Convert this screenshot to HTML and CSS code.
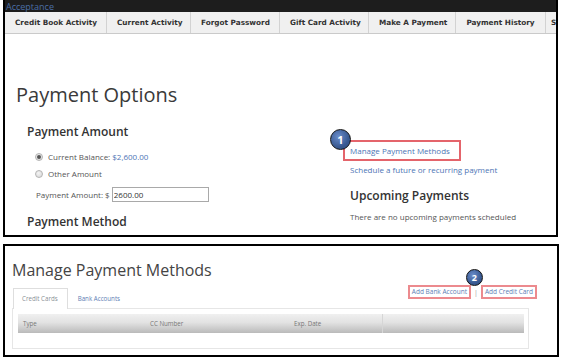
FILE: index.html
```html
<!DOCTYPE html>
<html>
<head>
<meta charset="utf-8">
<link rel="stylesheet" href="styles.css">
</head>
<body>
<div class="shot shot-top">
  <div class="topbar"><span class="env">Acceptance</span></div>
  <nav class="nav">
    <span class="nav-item">Credit Book Activity</span>
    <span class="nav-item">Current Activity</span>
    <span class="nav-item">Forgot Password</span>
    <span class="nav-item">Gift Card Activity</span>
    <span class="nav-item">Make A Payment</span>
    <span class="nav-item">Payment History</span>
    <span class="nav-item">Statements</span>
  </nav>
  <div class="page">
    <h1 class="title">Payment Options</h1>
    <div class="cols">
      <section class="col-left">
        <h2 class="sub">Payment Amount</h2>
        <div class="opt"><span class="radio checked"></span>Current Balance: <span class="amt">$2,600.00</span></div>
        <div class="opt"><span class="radio"></span>Other Amount</div>
        <div class="amount-row">Payment Amount: $ <input class="amount-input" type="text" value="2600.00"></div>
        <h2 class="sub sub-method">Payment Method</h2>
      </section>
      <section class="col-right">
        <div class="callout"><span class="badge badge-1">1</span><a class="link">Manage Payment Methods</a></div>
        <a class="link link-block">Schedule a future or recurring payment</a>
        <h2 class="sub sub-upcoming">Upcoming Payments</h2>
        <p class="note">There are no upcoming payments scheduled</p>
      </section>
    </div>
  </div>
</div>

<div class="shot shot-bottom">
  <h1 class="title-2">Manage Payment Methods</h1>
  <div class="tab-row">
    <div class="tabs">
      <span class="tab active">Credit Cards</span>
      <span class="tab">Bank Accounts</span>
    </div>
    <div class="actions">
      <span class="badge badge-2">2</span>
      <a class="action">Add Bank Account</a>
      <span class="pipe">|</span>
      <a class="action">Add Credit Card</a>
    </div>
  </div>
  <div class="tab-panel">
    <div class="thead">
      <span class="th">Type</span>
      <span class="th">CC Number</span>
      <span class="th">Exp. Date</span>
      <span class="th th-last"></span>
    </div>
  </div>
</div>
</body>
</html>
```

FILE: styles.css
```css
* { box-sizing: border-box; }
html, body { margin: 0; padding: 0; background: #fff; }
body {
  font-family: "Open Sans", "Liberation Sans", sans-serif;
  color: #555;
  width: 564px;
  height: 363px;
  overflow: hidden;
}

.shot {
  border: 2px solid #000;
  background: #fff;
  overflow: hidden;
  position: relative;
}

.shot-top {
  margin-left: 3px;
  width: 555px;
  height: 237px;
  border-top: none;
}

.topbar {
  height: 12px;
  background: #1d1d1d;
  padding-left: 1px;
  line-height: 9px;
  overflow: hidden;
}
.env {
  font-size: 9px;
  color: #4b6ea6;
}

.nav {
  display: flex;
  height: 22px;
  background: #f0f0f0;
  border-bottom: 1px solid #cacaca;
  overflow: hidden;
  white-space: nowrap;
}
.nav-item {
  flex: none;
  font-family: "DejaVu Sans", Verdana, sans-serif;
  font-weight: bold;
  font-size: 7.3px;
  color: #333;
  line-height: 21px;
  padding: 0 10px;
  border-right: 1px solid #d2d2d2;
  text-align: center;
}
.nav-item:nth-child(1) { width: 102px; }
.nav-item:nth-child(2) { width: 84px; }
.nav-item:nth-child(3) { width: 89px; }
.nav-item:nth-child(4) { width: 89px; }
.nav-item:nth-child(5) { width: 87px; }
.nav-item:nth-child(6) { width: 90px; }
.nav-item:nth-child(7) { padding-left: 5px; border-right: none; }

.page {
  padding-left: 11px;
}
.title {
  margin: 49px 0 0;
  font-size: 20px;
  font-weight: 400;
  line-height: 24px;
  color: #3a3a3a;
}
.cols {
  display: grid;
  grid-template-columns: 334px 1fr;
  margin-top: 17px;
}
.sub {
  margin: 0;
  font-size: 12px;
  font-weight: 600;
  line-height: 16px;
  color: #333;
}
.col-left .sub { padding-left: 11px; }
.sub-method { margin-top: 10px; }

.opt {
  display: flex;
  align-items: center;
  font-size: 8px;
  line-height: 17px;
  padding-left: 19px;
}
.radio {
  width: 8px;
  height: 8px;
  border-radius: 50%;
  border: 1px solid #b4b4b4;
  background: radial-gradient(circle at 40% 35%, #f4f4f4, #d6d6d6);
  margin-right: 5px;
  flex: none;
  display: flex;
  align-items: center;
  justify-content: center;
}
.radio.checked::after {
  content: "";
  width: 4px;
  height: 4px;
  border-radius: 50%;
  background: #555;
}
.amt { color: #4d75b5; margin-left: 2px; }
.col-left .opt:nth-of-type(1) { margin-top: 8px; }

.amount-row {
  display: flex;
  align-items: center;
  height: 20px;
  margin-top: 2px;
  padding-left: 20px;
  font-size: 8px;
  white-space: pre;
}
.amount-input {
  width: 97px;
  height: 15px;
  border: 1px solid #a9a9a9;
  padding: 0 1px;
  margin: 0;
  font-family: "Open Sans", "Liberation Sans", sans-serif;
  font-size: 8px;
  color: #333;
  outline: none;
}

.col-right {
  font-size: 8px;
  line-height: 17px;
}
.link {
  color: #4d75b5;
  font-size: 8px;
  line-height: 17px;
  text-decoration: none;
}
.link-block { display: block; }
.callout {
  position: relative;
  display: block;
  width: max-content;
  margin-top: 16px;
  margin-left: -7px;
  border: 2px solid #e4646b;
  padding: 0 9px 0 5px;
  height: 21px;
  line-height: 17px;
}
.callout .link { display: block; }
.sub-upcoming { margin-top: 10px; }
.note {
  margin: 4px 0 0;
  font-size: 8px;
  line-height: 17px;
  color: #555;
}

.badge {
  position: absolute;
  border-radius: 50%;
  border: 1.5px solid #111;
  background: radial-gradient(circle at 40% 35%, #6a8dcb, #3a5a92 60%, #2d4a7e);
  color: #fff;
  font-family: "Open Sans", "Liberation Sans", sans-serif;
  font-weight: 700;
  display: flex;
  align-items: center;
  justify-content: center;
  line-height: 1;
}
.badge-1 {
  width: 21px;
  height: 21px;
  left: -15px;
  top: -13.5px;
  font-size: 11px;
}
.badge-2 {
  width: 17px;
  height: 17px;
  left: 58px;
  top: -16px;
  font-size: 9px;
}

.shot-bottom {
  margin-top: 7px;
  margin-left: 3px;
  width: 556px;
  height: 113px;
}
.title-2 {
  margin: 14px 0 0 7px;
  font-size: 16px;
  font-weight: 400;
  line-height: 20px;
  color: #444;
}
.tab-row {
  display: flex;
  justify-content: space-between;
  align-items: flex-start;
  margin-top: 5px;
}
.tabs {
  display: flex;
  margin-top: 3px;
  padding-left: 8px;
  margin-bottom: -1px;
}
.tab {
  height: 21px;
  font-size: 6.2px;
  line-height: 20px;
  padding: 0 9px 0 8px;
  color: #5d7eb4;
  border: 1px solid transparent;
  border-bottom: none;
}
.tab.active {
  background: #fff;
  color: #8a9096;
  border-color: #dedede;
  position: relative;
  z-index: 1;
}
.tab + .tab { padding-left: 9px; }

.actions {
  position: relative;
  display: flex;
  align-items: center;
  margin-right: 20px;
}
.action {
  font-size: 6.5px;
  line-height: 10px;
  color: #5d7eb4;
  border: 2px solid #ec8a8e;
  padding: 0 2px;
  text-decoration: none;
}
.pipe {
  font-size: 7px;
  color: #999;
  margin: 0 3px;
}

.tab-panel {
  margin: 0 28px 0 7px;
  border: 1px solid #e6e6e6;
  padding: 5px 4px 15px 5px;
}
.thead {
  display: grid;
  grid-template-columns: 127px 144px 93px 1fr;
  height: 19px;
  background: linear-gradient(#f0f0f0, #e2e2e2 45%, #bababa);
}
.th {
  font-size: 6.2px;
  line-height: 19px;
  color: #777;
  padding-left: 5px;
}
.th-last { border-left: 1px solid #d6d6d6; }
```
